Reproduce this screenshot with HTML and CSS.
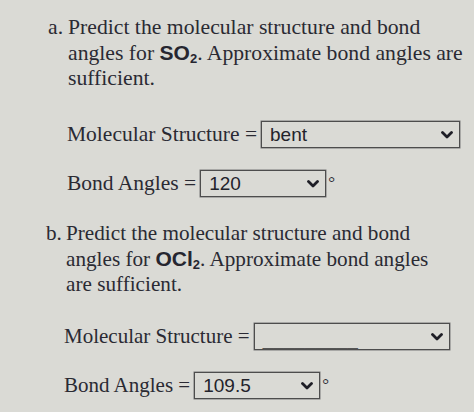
FILE: index.html
```html
<!DOCTYPE html>
<html>
<head>
<meta charset="utf-8">
<link rel="stylesheet" href="styles.css">
</head>
<body>
<main class="page">
  <section class="question q-a">
    <div class="prompt">
      <span class="letter">a.</span>
      <p class="text">Predict the molecular structure and bond<br>angles for <span class="formula">SO<sub>2</sub></span>. Approximate bond angles are<br>sufficient.</p>
    </div>
    <div class="fields">
      <div class="field">
        <span class="label">Molecular Structure =</span>
        <div class="select wide"><span class="value">bent</span><svg class="chev" viewBox="0 0 12 8"><path d="M1.5 1.5 L6 6 L10.5 1.5"/></svg></div>
      </div>
      <div class="field">
        <span class="label">Bond Angles =</span>
        <div class="select narrow"><span class="value">120</span><svg class="chev" viewBox="0 0 12 8"><path d="M1.5 1.5 L6 6 L10.5 1.5"/></svg></div>
        <span class="deg">°</span>
      </div>
    </div>
  </section>
  <section class="question q-b">
    <div class="prompt">
      <span class="letter">b.</span>
      <p class="text">Predict the molecular structure and bond<br>angles for <span class="formula">OCl<sub>2</sub></span>. Approximate bond angles<br>are sufficient.</p>
    </div>
    <div class="fields">
      <div class="field">
        <span class="label">Molecular Structure =</span>
        <div class="select wide"><span class="value blank">_________</span><svg class="chev" viewBox="0 0 12 8"><path d="M1.5 1.5 L6 6 L10.5 1.5"/></svg></div>
      </div>
      <div class="field">
        <span class="label">Bond Angles =</span>
        <div class="select narrow"><span class="value">109.5</span><svg class="chev" viewBox="0 0 12 8"><path d="M1.5 1.5 L6 6 L10.5 1.5"/></svg></div>
        <span class="deg">°</span>
      </div>
    </div>
  </section>
</main>
</body>
</html>
```

FILE: styles.css
```css
html, body {
  margin: 0;
  padding: 0;
  background: #dadad5;
}
body {
  width: 474px;
  height: 412px;
  overflow: hidden;
  font-family: "Liberation Serif", "Times New Roman", serif;
  color: #2a2a33;
}
.page {
  padding: 15px 0 0 48px;
  display: flex;
  flex-direction: column;
}
.question {
  display: flex;
  flex-direction: column;
}
.q-b {
  margin-top: 24px;
  margin-left: -2px;
}
.prompt {
  display: flex;
  font-size: 21.7px;
  line-height: 25px;
}
.q-b .prompt {
  font-size: 21.2px;
}
.letter {
  width: 20px;
  flex: none;
}
.text {
  margin: 0;
  white-space: nowrap;
}
.formula {
  font-family: "Liberation Sans", Arial, sans-serif;
  font-weight: bold;
  font-size: 21px;
  color: #262630;
}
.formula sub {
  font-size: 13px;
  vertical-align: -3px;
  line-height: 0;
}
.fields {
  display: flex;
  flex-direction: column;
  gap: 22px;
  padding-left: 19px;
  margin-top: 30px;
}
.q-b .fields {
  margin-top: 26px;
  padding-left: 18px;
}
.field {
  display: flex;
  align-items: center;
  font-size: 21.5px;
}
.q-b .field {
  font-size: 21px;
}
.label {
  margin-right: 4px;
}
.select {
  box-sizing: border-box;
  height: 27px;
  border: 1px solid #4d4d4d;
  box-shadow: 0 0 0 0.5px #777;
  display: flex;
  align-items: center;
  justify-content: space-between;
  padding: 0 6px 0 8px;
  font-family: "Liberation Sans", Arial, sans-serif;
  font-size: 19px;
  color: #23232b;
}
.wide {
  width: 199px;
}
.q-b .wide {
  width: 196px;
}
.narrow {
  width: 126px;
}
.value.blank {
  color: #555;
  align-self: flex-end;
  line-height: 20px;
}
.chev {
  width: 12px;
  height: 8px;
  fill: none;
  stroke: #1e1e26;
  stroke-width: 2.8;
  stroke-linecap: round;
  stroke-linejoin: round;
}
.deg {
  font-size: 17px;
  line-height: 17px;
  align-self: flex-start;
  margin-left: 2px;
  margin-top: 4px;
}
```
